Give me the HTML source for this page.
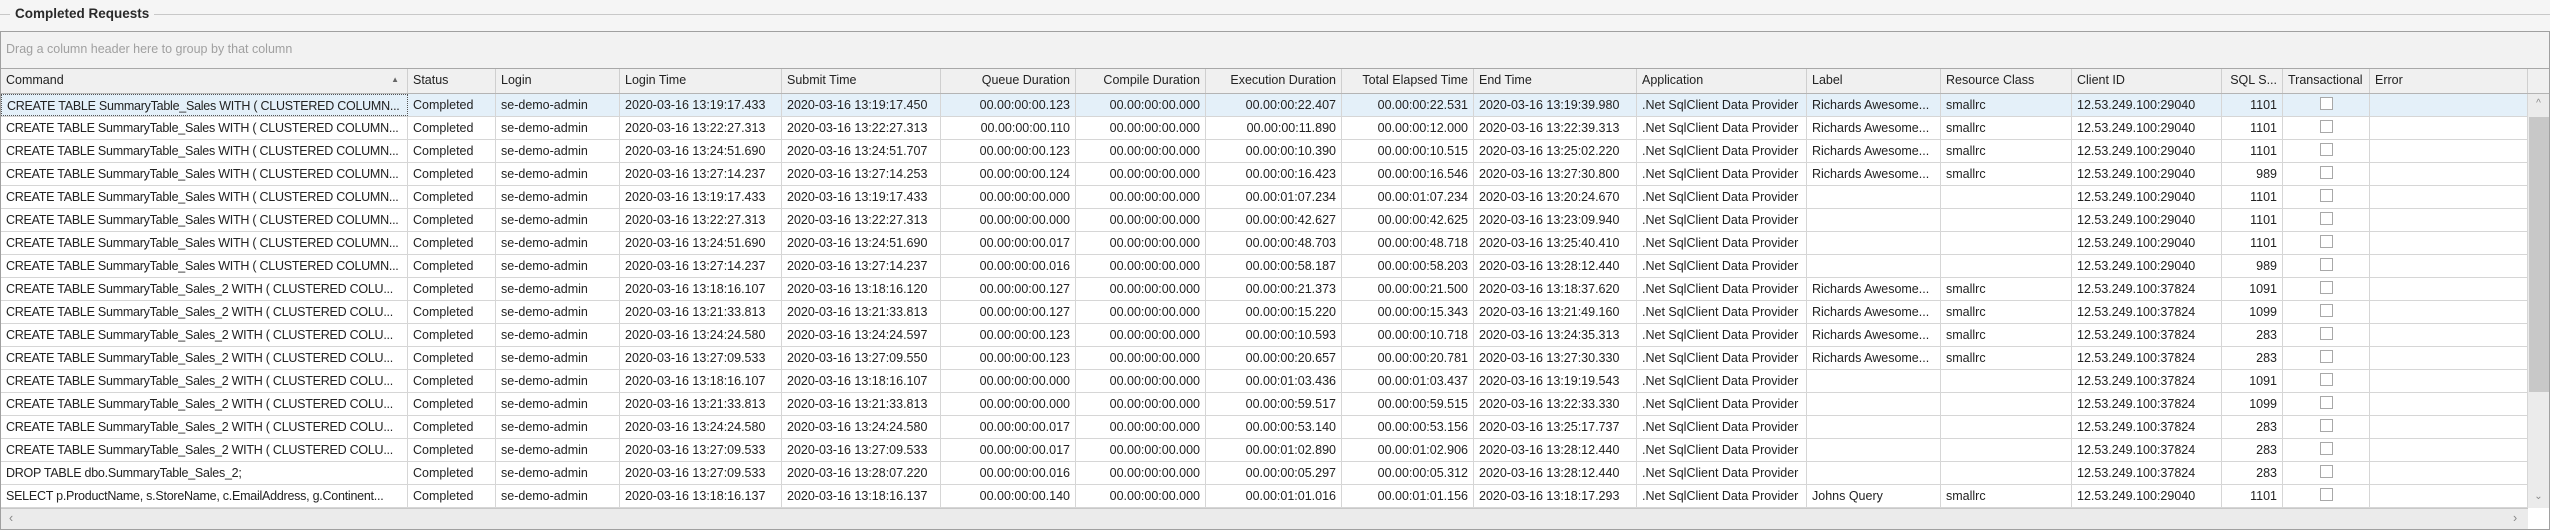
<!DOCTYPE html>
<html><head><meta charset="utf-8"><style>
*{box-sizing:border-box;margin:0;padding:0}
body{width:2550px;height:530px;background:#f5f5f5;font-family:"Liberation Sans",Arial,sans-serif;font-size:12.5px;color:#222;position:relative;overflow:hidden}
.title{position:absolute;left:0;top:14px;width:2550px;border-top:1px solid #c8c8c8}
.title span{position:absolute;left:10px;top:-9px;background:#f5f5f5;padding:0 5px;font-weight:bold;font-size:13.5px;color:#2a2a2a}
.frame{position:absolute;left:0;top:31px;width:2550px;height:499px;border:1px solid #a0a0a0;background:#fff}
.group{position:absolute;left:0;top:0;width:2548px;height:37px;background:#f2f2f2;border-bottom:1px solid #a8a8a8;color:#a0a0a0;padding:10px 0 0 5px}
.hdr{position:absolute;left:0;top:37px;height:25px;width:2548px;background:#f0f0f0;border-bottom:1px solid #b4b4b4}
.c{position:absolute;top:0;height:100%;padding:4px 5px 0 5px;white-space:nowrap;overflow:hidden;border-right:1px solid #cfcfcf}
.r{text-align:right}
.row{position:absolute;left:0;height:23px;width:2527px;border-bottom:1px solid #d6d6d6;background:#fff}
.row .c{padding-top:4px;border-right:1px solid #d6d6d6}
.sel{background:#e4f0f9}
.cb{display:inline-block;width:13px;height:13px;border:1px solid #a8a8a8;background:#fff;margin-top:-1px}
.vs{position:absolute;left:2527px;top:62px;width:21px;height:414px;background:#ebebeb}
.hs{position:absolute;left:0;top:476px;width:2527px;height:21px;background:#ebebeb;border-top:1px solid #c8c8c8}
</style></head><body>
<div class="title"><span>Completed Requests</span></div>
<div class="frame">
<div class="group">Drag a column header here to group by that column</div>
<div class="hdr" id="hdr"></div>
<div id="rows"></div>
<div class="vs"><div style="position:absolute;left:0;top:0;width:21px;height:22px;background:#ebebeb;color:#888;text-align:center;font-size:10px;padding-top:4px">&#94;</div><div style="position:absolute;left:1px;top:23px;width:20px;height:275px;background:#c8c8c8"></div><div style="position:absolute;left:0;top:392px;width:21px;height:22px;color:#888;text-align:center;font-size:10px;padding-top:5px">&#8964;</div></div>
<div class="hs"><span style="position:absolute;left:8px;top:2px;color:#888">&#8249;</span><span style="position:absolute;left:2512px;top:2px;color:#888">&#8250;</span></div>
</div>
<script>
var cols=[[0,407,"Command",0],[407,88,"Status",0],[495,124,"Login",0],[619,162,"Login Time",0],[781,159,"Submit Time",0],[940,135,"Queue Duration",1],[1075,130,"Compile Duration",1],[1205,136,"Execution Duration",1],[1341,132,"Total Elapsed Time",1],[1473,163,"End Time",0],[1636,170,"Application",0],[1806,134,"Label",0],[1940,131,"Resource Class",0],[2071,150,"Client ID",0],[2221,61,"SQL S...",1],[2282,87,"Transactional",0],[2369,158,"Error",0]];
var h="";cols.forEach(function(c,i){h+='<div class="c'+(c[3]?' r':'')+'" style="left:'+c[0]+'px;width:'+c[1]+'px">'+c[2]+(i==0?'<span style="position:absolute;right:8px;top:6px;font-size:8px;color:#666">&#9650;</span>':'')+'</div>'});
document.getElementById('hdr').innerHTML=h;
var A="CREATE TABLE SummaryTable_Sales WITH ( CLUSTERED COLUMN...",B="CREATE TABLE SummaryTable_Sales_2 WITH ( CLUSTERED COLU...",RA="Richards Awesome...",D="2020-03-16 ",Z="00.00:00:";
var d=[[A,"13:19:17.433","13:19:17.450","00.123","22.407","22.531","13:19:39.980",RA,"smallrc","29040","1101"],
[A,"13:22:27.313","13:22:27.313","00.110","11.890","12.000","13:22:39.313",RA,"smallrc","29040","1101"],
[A,"13:24:51.690","13:24:51.707","00.123","10.390","10.515","13:25:02.220",RA,"smallrc","29040","1101"],
[A,"13:27:14.237","13:27:14.253","00.124","16.423","16.546","13:27:30.800",RA,"smallrc","29040","989"],
[A,"13:19:17.433","13:19:17.433","00.000","01:07.234","01:07.234","13:20:24.670","","","29040","1101"],
[A,"13:22:27.313","13:22:27.313","00.000","00:42.627","00:42.625","13:23:09.940","","","29040","1101"],
[A,"13:24:51.690","13:24:51.690","00.017","00:48.703","00:48.718","13:25:40.410","","","29040","1101"],
[A,"13:27:14.237","13:27:14.237","00.016","00:58.187","00:58.203","13:28:12.440","","","29040","989"],
[B,"13:18:16.107","13:18:16.120","00.127","21.373","21.500","13:18:37.620",RA,"smallrc","37824","1091"],
[B,"13:21:33.813","13:21:33.813","00.127","15.220","15.343","13:21:49.160",RA,"smallrc","37824","1099"],
[B,"13:24:24.580","13:24:24.597","00.123","10.593","10.718","13:24:35.313",RA,"smallrc","37824","283"],
[B,"13:27:09.533","13:27:09.550","00.123","20.657","20.781","13:27:30.330",RA,"smallrc","37824","283"],
[B,"13:18:16.107","13:18:16.107","00.000","01:03.436","01:03.437","13:19:19.543","","","37824","1091"],
[B,"13:21:33.813","13:21:33.813","00.000","00:59.517","00:59.515","13:22:33.330","","","37824","1099"],
[B,"13:24:24.580","13:24:24.580","00.017","00:53.140","00:53.156","13:25:17.737","","","37824","283"],
[B,"13:27:09.533","13:27:09.533","00.017","01:02.890","01:02.906","13:28:12.440","","","37824","283"],
["DROP TABLE dbo.SummaryTable_Sales_2;","13:27:09.533","13:28:07.220","00.016","00:05.297","00:05.312","13:28:12.440","","","37824","283"],
["SELECT p.ProductName, s.StoreName, c.EmailAddress, g.Continent...","13:18:16.137","13:18:16.137","00.140","01:01.016","01:01.156","13:18:17.293","Johns Query","smallrc","29040","1101"]];
function t(v){return v.indexOf(":")>0?Z.slice(0,6)+v:Z+v}
var o="";d.forEach(function(r,i){
var v=[r[0],"Completed","se-demo-admin",D+r[1],D+r[2],Z+r[3],Z+"00.000",t(r[4]),t(r[5]),D+r[6],".Net SqlClient Data Provider",r[7],r[8],"12.53.249.100:"+r[9],r[10],'<span class="cb"></span>',""];
o+='<div class="row'+(i==0?' sel':'')+'" style="top:'+(62+i*23)+'px">';
cols.forEach(function(c,j){o+='<div class="c'+(c[3]?' r':'')+'" style="left:'+c[0]+'px;width:'+c[1]+'px'+(j==15?';text-align:center':'')+(j==0?';letter-spacing:-0.25px':'')+(i==0&&j==0?';border:1px dotted #555':'')+'">'+v[j]+'</div>'});
o+='</div>'});
document.getElementById('rows').innerHTML=o;
</script>
</body></html>
